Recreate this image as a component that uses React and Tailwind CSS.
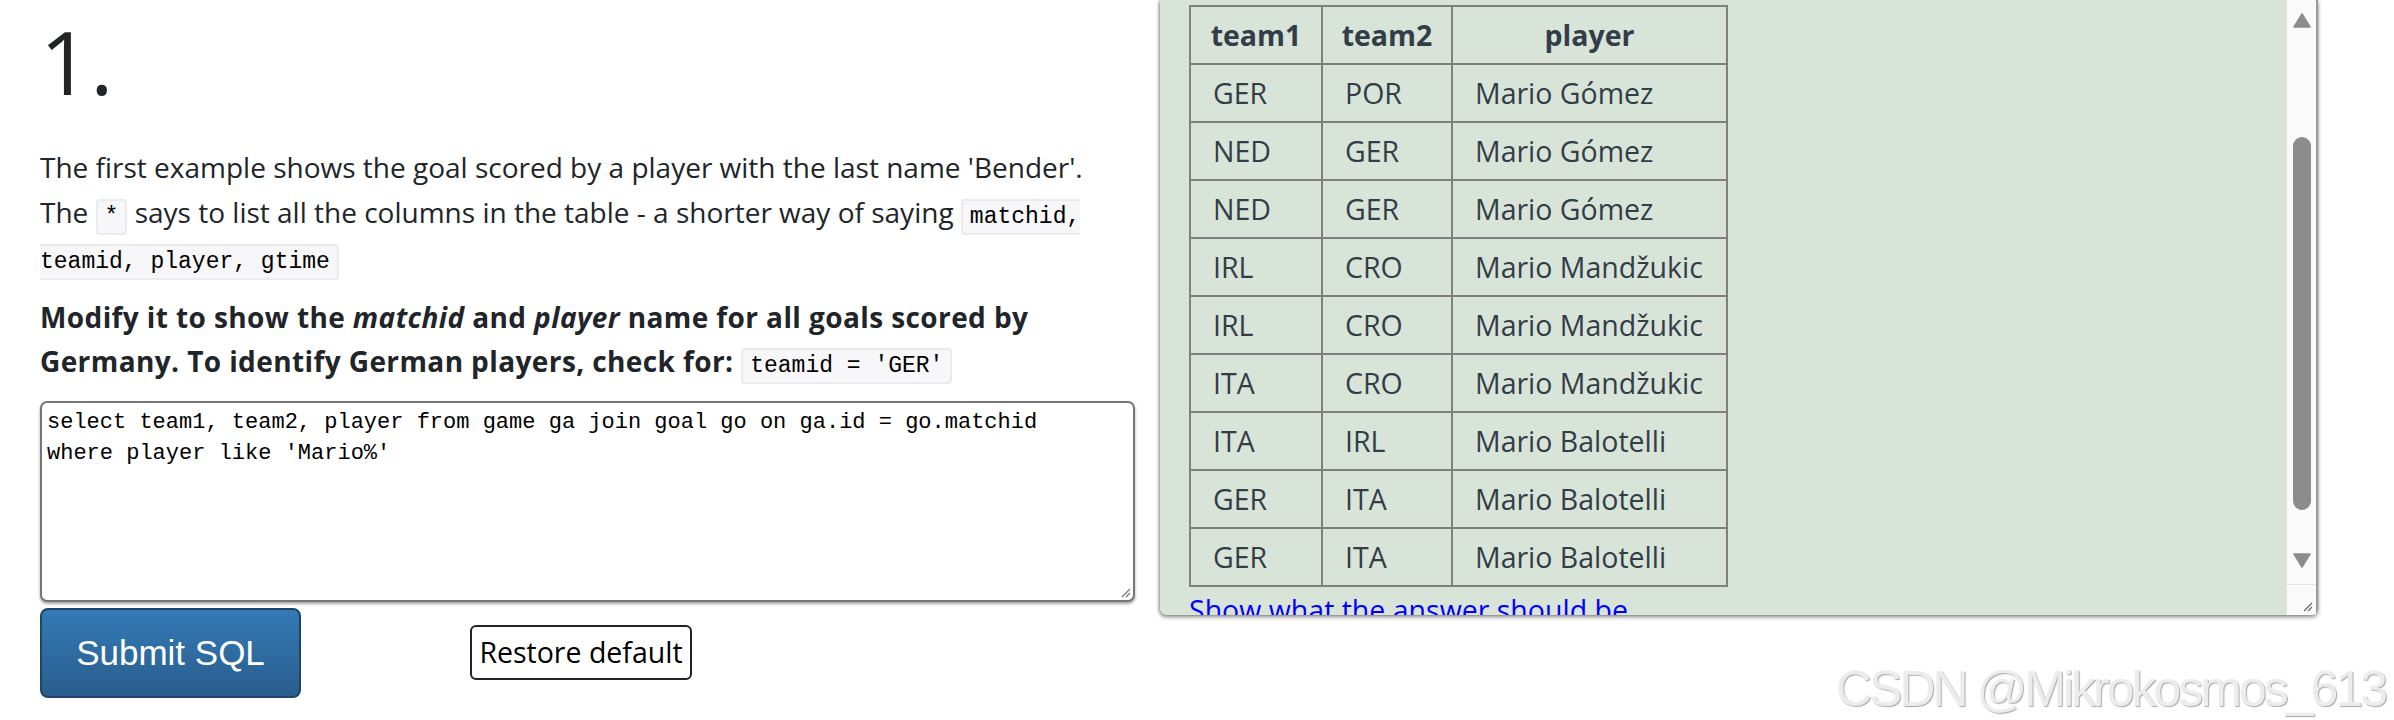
const rows = [
  ["GER", "POR", "Mario Gómez"],
  ["NED", "GER", "Mario Gómez"],
  ["NED", "GER", "Mario Gómez"],
  ["IRL", "CRO", "Mario Mandžukic"],
  ["IRL", "CRO", "Mario Mandžukic"],
  ["ITA", "CRO", "Mario Mandžukic"],
  ["ITA", "IRL", "Mario Balotelli"],
  ["GER", "ITA", "Mario Balotelli"],
  ["GER", "ITA", "Mario Balotelli"],
];

const Code = ({ children }) => (
  <code className="font-['Liberation_Mono',monospace] font-normal tracking-normal leading-none text-[23px] text-black bg-[#f7f7f9] border-2 border-[#ebebef] rounded-[4px] px-[7px] py-[3px]">
    {children}
  </code>
);

const App = () => {
  return (
    <div className="relative flex w-[2394px] h-[720px] bg-white overflow-hidden font-['Open_Sans',sans-serif] text-[#212529]">
      {/* question column */}
      <div className="w-[1160px] shrink-0 pl-[40px] pr-[25px]">
        <h1 className="font-['Open_Sans',sans-serif] font-normal text-[88px] leading-none mt-[17px] text-[#212529]">1.</h1>
        <p className="text-[28px] leading-[45px] mt-[40px]">
          The first example shows the goal scored by a player with the last name 'Bender'. The <Code>*</Code> says to list all the columns in the table - a shorter way of saying <Code>matchid, teamid, player, gtime</Code>
        </p>
        <p className="text-[28px] leading-[44px] font-bold tracking-[0.4px] mt-[15px]">
          Modify it to show the <i>matchid</i> and <i>player</i> name for all goals scored by Germany. To identify German players, check for: <Code>teamid = 'GER'</Code>
        </p>
        <div className="mt-[18px] w-[1095px] h-[201px] border-2 border-[#767676] rounded-[7px] shadow-[0_2px_3px_rgba(0,0,0,0.35)] bg-white relative">
          <pre className="font-['Liberation_Mono',monospace] text-[22px] leading-[31px] text-black px-[5px] pt-[4px] whitespace-pre-wrap">
{`select team1, team2, player from game ga join goal go on ga.id = go.matchid
where player like 'Mario%'`}
          </pre>
          <svg className="absolute right-[2px] bottom-[2px]" width="12" height="12" viewBox="0 0 12 12">
            <path d="M11 3 L3 11 M11 7 L7 11" stroke="#777" strokeWidth="1.2" />
          </svg>
        </div>
        <div className="flex items-start mt-[6px]">
          <button className="w-[261px] h-[90px] rounded-[8px] border-2 border-[#1f4466] bg-gradient-to-b from-[#337ab7] to-[#2a5e8c] text-white text-[35px] font-['Liberation_Sans',Arial,sans-serif]">
            Submit SQL
          </button>
          <button className="ml-[169px] mt-[17px] w-[222px] h-[55px] rounded-[6px] border-2 border-[#222] bg-white text-[28.5px] text-black leading-none">
            Restore default
          </button>
        </div>
      </div>

      {/* result panel */}
      <div className="w-[1158px] h-[615px] shrink-0 flex bg-[#d9e4d9] rounded-b-[6px] shadow-[0_2px_4px_rgba(0,0,0,0.45),-1px_0_3px_rgba(0,0,0,0.25)] overflow-hidden">
        <div className="flex-1 pl-[29px] pt-[5px] overflow-hidden">
          <table className="table-fixed w-[537px] border-collapse text-[28.5px] text-[#333d47]">
            <thead>
              <tr className="h-[58px]">
                <th className="border-2 border-[#808080] w-[132px] px-[8px] text-center font-bold">team1</th>
                <th className="border-2 border-[#808080] w-[130px] px-[8px] text-center font-bold">team2</th>
                <th className="border-2 border-[#808080] w-[275px] px-[8px] text-center font-bold">player</th>
              </tr>
            </thead>
            <tbody>
              {rows.map((r, i) => (
                <tr key={i} className="h-[58px]">
                  {r.map((c, j) => (
                    <td key={j} className="border-2 border-[#808080] pl-[22px] pr-[4px] text-left whitespace-nowrap">{c}</td>
                  ))}
                </tr>
              ))}
            </tbody>
          </table>
          <a className="block text-[#0000ff] text-[28.5px] leading-[38px] mt-[4px]">Show what the answer should be</a>
        </div>
        {/* scrollbar */}
        <div className="w-[31px] shrink-0 bg-[#fafafa] border-r-2 border-[#9a9a9a] flex flex-col items-center">
          <svg className="mt-[13px]" width="18" height="15" viewBox="0 0 18 15">
            <path d="M9 1 L17 14 L1 14 Z" fill="#8c8c8c" strokeLinejoin="round" stroke="#8c8c8c" strokeWidth="1.5" />
          </svg>
          <div className="mt-[109px] w-[18px] h-[373px] rounded-full bg-[#8c8c8c]" />
          <svg className="mt-[43px]" width="18" height="15" viewBox="0 0 18 15">
            <path d="M1 1 L17 1 L9 14 Z" fill="#8c8c8c" strokeLinejoin="round" stroke="#8c8c8c" strokeWidth="1.5" />
          </svg>
          <div className="mt-[16px] w-full flex-1 border-t border-[#e3e3e3] relative">
            <svg className="absolute right-[3px] bottom-[3px]" width="12" height="12" viewBox="0 0 12 12">
              <path d="M11 3 L3 11 M11 7 L7 11" stroke="#666" strokeWidth="1.2" />
            </svg>
          </div>
        </div>
      </div>

      {/* watermark */}
      <div className="absolute left-[1836px] top-[652px] font-['Liberation_Sans',Arial,sans-serif] text-[50px] tracking-[-3px] text-[#ececec] [text-shadow:1px_1px_1px_#a8a8a8]">
        CSDN @Mikrokosmos_613
      </div>
    </div>
  );
};

export default App;
